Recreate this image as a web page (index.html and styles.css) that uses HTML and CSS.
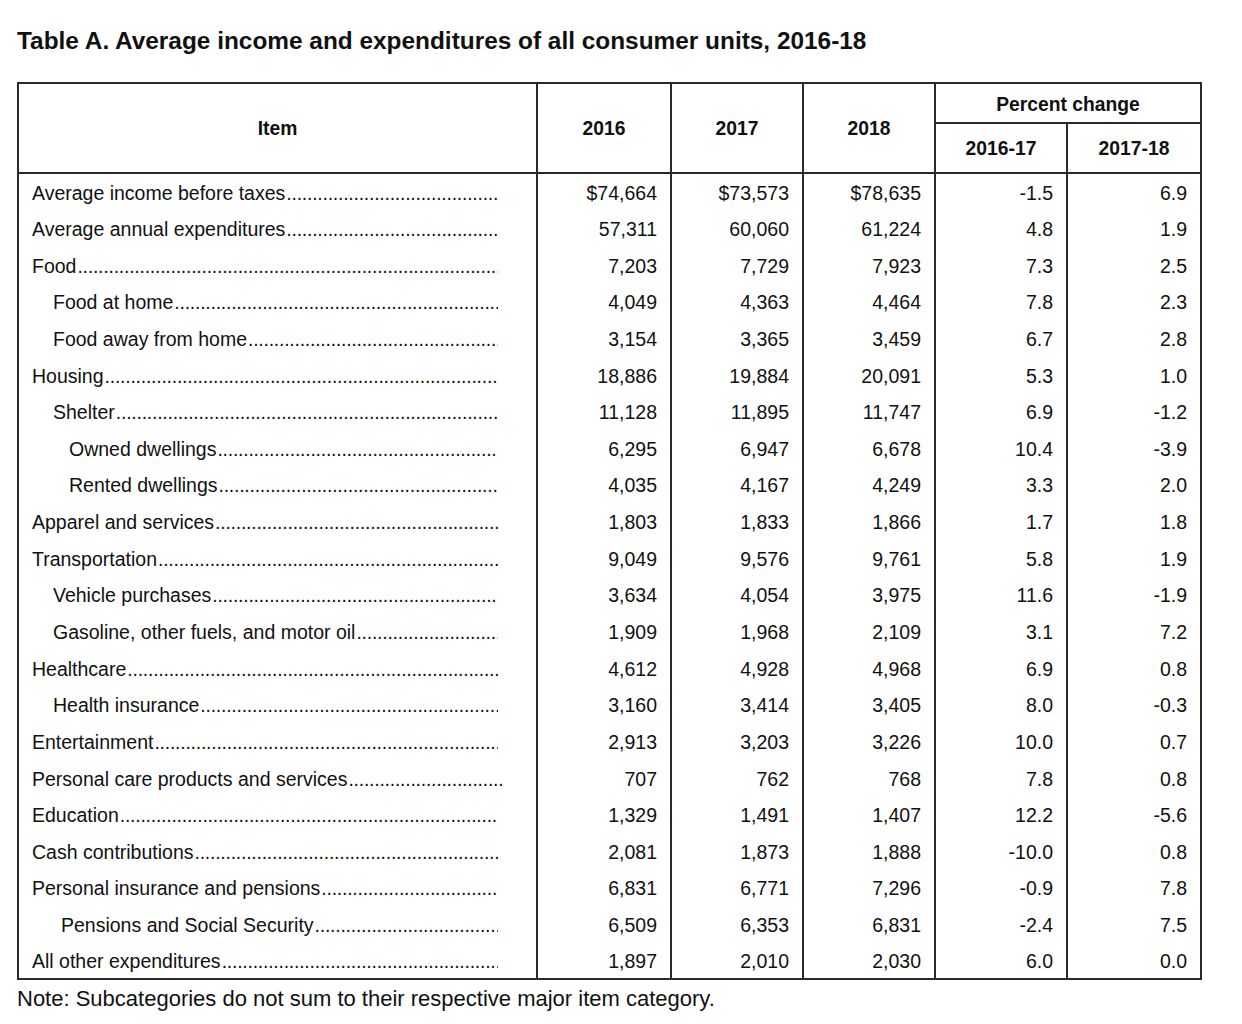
FILE: index.html
```html
<!DOCTYPE html>
<html lang="en">
<head>
<meta charset="utf-8">
<title>Table A</title>
<link rel="stylesheet" href="styles.css">
</head>
<body>
<div class="page">
  <h1 class="title">Table A. Average income and expenditures of all consumer units, 2016-18</h1>
  <table class="data">
    <colgroup>
      <col class="c-item"><col class="c-num"><col class="c-num2"><col class="c-num2"><col class="c-num2"><col class="c-num3">
    </colgroup>
    <thead>
      <tr class="h1">
        <th rowspan="2" class="tall">Item</th>
        <th rowspan="2" class="tall">2016</th>
        <th rowspan="2" class="tall">2017</th>
        <th rowspan="2" class="tall">2018</th>
        <th colspan="2" class="pc">Percent change</th>
      </tr>
      <tr class="h2">
        <th>2016-17</th>
        <th>2017-18</th>
      </tr>
    </thead>
    <tbody>
      <tr><td class="item l0"><span class="lab">Average income before taxes</span></td><td>$74,664</td><td>$73,573</td><td>$78,635</td><td>-1.5</td><td>6.9</td></tr>
      <tr><td class="item l0"><span class="lab">Average annual expenditures</span></td><td>57,311</td><td>60,060</td><td>61,224</td><td>4.8</td><td>1.9</td></tr>
      <tr><td class="item l0"><span class="lab">Food</span></td><td>7,203</td><td>7,729</td><td>7,923</td><td>7.3</td><td>2.5</td></tr>
      <tr><td class="item l1"><span class="lab">Food at home</span></td><td>4,049</td><td>4,363</td><td>4,464</td><td>7.8</td><td>2.3</td></tr>
      <tr><td class="item l1"><span class="lab">Food away from home</span></td><td>3,154</td><td>3,365</td><td>3,459</td><td>6.7</td><td>2.8</td></tr>
      <tr><td class="item l0"><span class="lab">Housing</span></td><td>18,886</td><td>19,884</td><td>20,091</td><td>5.3</td><td>1.0</td></tr>
      <tr><td class="item l1"><span class="lab">Shelter</span></td><td>11,128</td><td>11,895</td><td>11,747</td><td>6.9</td><td>-1.2</td></tr>
      <tr><td class="item l2"><span class="lab">Owned dwellings</span></td><td>6,295</td><td>6,947</td><td>6,678</td><td>10.4</td><td>-3.9</td></tr>
      <tr><td class="item l2"><span class="lab">Rented dwellings</span></td><td>4,035</td><td>4,167</td><td>4,249</td><td>3.3</td><td>2.0</td></tr>
      <tr><td class="item l0"><span class="lab">Apparel and services</span></td><td>1,803</td><td>1,833</td><td>1,866</td><td>1.7</td><td>1.8</td></tr>
      <tr><td class="item l0"><span class="lab">Transportation</span></td><td>9,049</td><td>9,576</td><td>9,761</td><td>5.8</td><td>1.9</td></tr>
      <tr><td class="item l1"><span class="lab">Vehicle purchases</span></td><td>3,634</td><td>4,054</td><td>3,975</td><td>11.6</td><td>-1.9</td></tr>
      <tr><td class="item l1"><span class="lab">Gasoline, other fuels, and motor oil</span></td><td>1,909</td><td>1,968</td><td>2,109</td><td>3.1</td><td>7.2</td></tr>
      <tr><td class="item l0"><span class="lab">Healthcare</span></td><td>4,612</td><td>4,928</td><td>4,968</td><td>6.9</td><td>0.8</td></tr>
      <tr><td class="item l1"><span class="lab">Health insurance</span></td><td>3,160</td><td>3,414</td><td>3,405</td><td>8.0</td><td>-0.3</td></tr>
      <tr><td class="item l0"><span class="lab">Entertainment</span></td><td>2,913</td><td>3,203</td><td>3,226</td><td>10.0</td><td>0.7</td></tr>
      <tr><td class="item l0 wide"><span class="lab">Personal care products and services</span></td><td>707</td><td>762</td><td>768</td><td>7.8</td><td>0.8</td></tr>
      <tr><td class="item l0"><span class="lab">Education</span></td><td>1,329</td><td>1,491</td><td>1,407</td><td>12.2</td><td>-5.6</td></tr>
      <tr><td class="item l0"><span class="lab">Cash contributions</span></td><td>2,081</td><td>1,873</td><td>1,888</td><td>-10.0</td><td>0.8</td></tr>
      <tr><td class="item l0"><span class="lab">Personal insurance and pensions</span></td><td>6,831</td><td>6,771</td><td>7,296</td><td>-0.9</td><td>7.8</td></tr>
      <tr><td class="item l1b"><span class="lab">Pensions and Social Security</span></td><td>6,509</td><td>6,353</td><td>6,831</td><td>-2.4</td><td>7.5</td></tr>
      <tr><td class="item l0"><span class="lab">All other expenditures</span></td><td>1,897</td><td>2,010</td><td>2,030</td><td>6.0</td><td>0.0</td></tr>
    </tbody>
  </table>
  <p class="note">Note: Subcategories do not sum to their respective major item category.</p>
</div>
</body>
</html>
```

FILE: styles.css
```css
html, body {
  margin: 0;
  padding: 0;
  background: #fff;
}
body {
  font-family: "Liberation Sans", Arial, sans-serif;
  color: #111;
}
.page {
  padding: 25px 0 0 17px;
}
.title {
  margin: 0;
  font-size: 24.4px;
  line-height: 32px;
  font-weight: bold;
  color: #111;
}
.data {
  margin-top: 25px;
  width: 1183px;
  border-collapse: collapse;
  table-layout: fixed;
  font-size: 19.5px;
  border: 2px solid #2a2a2a;
}
.c-item { width: 519px; }
.c-num { width: 134px; }
.c-num2 { width: 132px; }
.c-num3 { width: 134px; }
.data th {
  font-weight: bold;
  font-size: 19.3px;
  text-align: center;
  border: 2px solid #2a2a2a;
  padding: 0;
  line-height: 22px;
}
.data th.tall { padding-top: 2px; }
.data th.pc { padding-top: 4px; }
.h1 { height: 40px; }
.h2 { height: 50px; }
.h2 th { padding-top: 2px; }
.data tbody tr { height: 36.65px; }
.data td {
  border-left: 2px solid #2a2a2a;
  border-right: 2px solid #2a2a2a;
  padding: 2px 13px 0 0;
  text-align: right;
  white-space: nowrap;
  line-height: 22px;
}
.data td.item {
  text-align: left;
  padding-right: 38px;
  overflow: hidden;
}
.data td.item.wide { padding-right: 33px; }
.lab {
  display: block;
  overflow: hidden;
  white-space: nowrap;
}
.lab::after {
  content: "..............................................................................................................................................";
  letter-spacing: -0.25px;
  padding-left: 1px;
}
.data td.l0 { padding-left: 13px; }
.data td.l1 { padding-left: 34px; }
.data td.l1b { padding-left: 42px; }
.data td.l2 { padding-left: 50px; }
.note {
  margin: 7px 0 0 0;
  font-size: 22px;
  line-height: 24px;
}
```
